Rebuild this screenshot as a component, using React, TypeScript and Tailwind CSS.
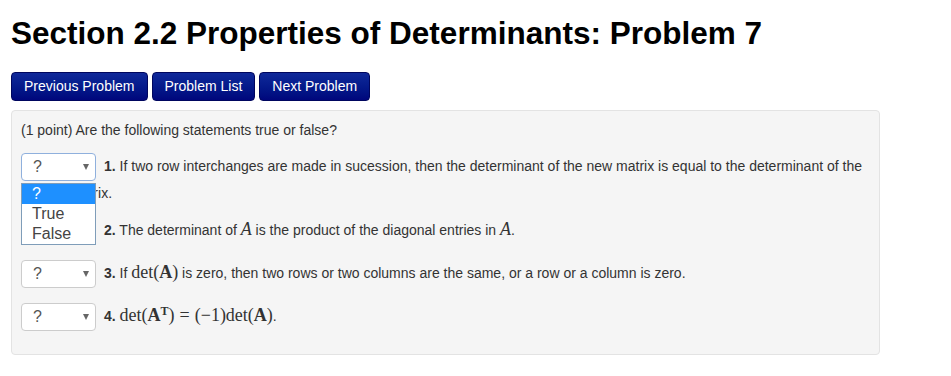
import React from 'react';

const navButtons = ['Previous Problem', 'Problem List', 'Next Problem'];

function Select({ focused = false }: { focused?: boolean }) {
  return (
    <span
      className={`inline-flex h-[28px] w-[75px] items-center justify-between rounded-[4px] border bg-white pl-[11px] pr-[6px] align-middle text-[16px] leading-[20px] text-[#555] ${
        focused ? 'border-[#8fb0dd]' : 'border-[#cccccc]'
      }`}
    >
      <span>?</span>
      <span className="h-0 w-0 border-l-[3px] border-r-[3px] border-t-[6px] border-l-transparent border-r-transparent border-t-[#666]" />
    </span>
  );
}

function M({ children }: { children: React.ReactNode }) {
  return <span className="font-['Liberation_Serif',serif] text-[18px]">{children}</span>;
}

export default function App() {
  return (
    <div className="min-h-[376px] bg-white px-[11px] pt-[15px] font-['Liberation_Sans',Arial,sans-serif] text-[14px] text-[#333]">
      <h1 className="text-[31.5px] font-bold leading-[36px] text-black">
        Section 2.2 Properties of Determinants: Problem 7
      </h1>

      <div className="mt-[21px] flex gap-[4px]">
        {navButtons.map((label) => (
          <button
            key={label}
            className="rounded-[4px] border border-[#00065e] bg-gradient-to-b from-[#10299a] to-[#00067c] px-[12px] py-[4px] text-[14px] leading-[19px] text-white"
          >
            {label}
          </button>
        ))}
      </div>

      <div className="mt-[9px] w-[869px] rounded-[4px] border border-[#e3e3e3] bg-[#f5f5f5] pb-[23px] pl-[9px] pr-[9px] pt-[9px] leading-[20px]">
        <div>(1 point) Are the following statements true or false?</div>

        <div className="relative mt-[13px] leading-[24px]">
          <Select focused />
          <span className="ml-[8px]">
            <b>1.</b> If two row interchanges are made in sucession, then the determinant of the new
            matrix is equal to the determinant of the
            <br />
            original matrix.
          </span>

          {/* open dropdown list */}
          <div className="absolute left-0 top-[30px] z-10 w-[75px] border border-[#7f9db9] bg-white text-[16px] leading-[19px] text-[#444]">
            <div className="h-[20px] bg-[#1e90ff] pl-[10px] text-white">?</div>
            <div className="h-[20px] pl-[10px]">True</div>
            <div className="h-[20px] pl-[10px]">False</div>
          </div>
        </div>

        <div className="mt-[12px]">
          <Select />
          <span className="ml-[8px]">
            <b>2.</b> The determinant of <M><i>A</i></M> is the product of the diagonal entries in{' '}
            <M><i>A</i></M>.
          </span>
        </div>

        <div className="mt-[15px]">
          <Select />
          <span className="ml-[8px]">
            <b>3.</b> If <M>det(<b>A</b>)</M> is zero, then two rows or two columns are the same, or a
            row or a column is zero.
          </span>
        </div>

        <div className="mt-[15px]">
          <Select />
          <span className="ml-[8px]">
            <b>4.</b>{' '}
            <M>
              det(<b>A</b>
              <sup className="text-[12px] font-bold">T</sup>)<span className="mx-[5px]">=</span>(−1)det(<b>A</b>)
            </M>
            .
          </span>
        </div>
      </div>
    </div>
  );
}
